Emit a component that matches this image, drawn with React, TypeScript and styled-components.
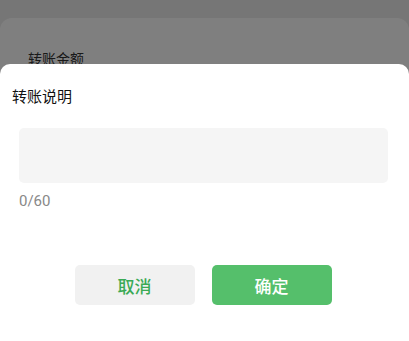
import React from "react";
import styled, { createGlobalStyle } from "styled-components";

const Global = createGlobalStyle`
  html, body { margin: 0; padding: 0; height: 100%; }
  body {
    background: #ededed;
    font-family: "Noto Sans CJK SC", "Noto Sans", sans-serif;
    overflow: hidden;
  }
`;

const Page = styled.div`
  padding-top: 18px;
  height: 100vh;
  box-sizing: border-box;
`;

const AmountCard = styled.div`
  background: #ffffff;
  border-radius: 12px;
  height: 200px;
  padding: 30px 28px 0;
  box-sizing: border-box;
`;

const CardLabel = styled.div`
  font-size: 14px;
  line-height: 20px;
  color: #333333;
`;

const Mask = styled.div`
  position: fixed;
  inset: 0;
  background: rgba(0, 0, 0, 0.5);
`;

const Sheet = styled.div`
  position: fixed;
  left: 0;
  right: 0;
  top: 64px;
  bottom: 0;
  background: #ffffff;
  border-radius: 10px 10px 0 0;
  display: flex;
  flex-direction: column;
`;

const Title = styled.div`
  padding: 21px 12px 0;
  font-size: 15px;
  line-height: 22px;
  font-weight: 400;
  color: #111111;
`;

const Field = styled.div`
  margin: 21px 21px 0 19px;
  height: 55px;
  background: #f5f5f5;
  border-radius: 5px;
`;

const Counter = styled.div`
  margin: 8px 19px 0;
  font-size: 15px;
  line-height: 20px;
  color: #888888;
  font-family: "Roboto", "Noto Sans", sans-serif;
`;

const Actions = styled.div`
  display: flex;
  justify-content: center;
  gap: 17px;
  margin-top: 54px;
  padding-right: 3px;
`;

const Button = styled.button<{ $primary?: boolean }>`
  width: 120px;
  height: 40px;
  border: none;
  border-radius: 5px;
  font-family: "Noto Sans CJK SC", sans-serif;
  font-size: 17px;
  font-weight: 500;
  background: ${(p) => (p.$primary ? "#55bf6b" : "#f1f1f1")};
  color: ${(p) => (p.$primary ? "#ffffff" : "#3aaa55")};
  padding: 0;
`;

export default function App() {
  return (
    <>
      <Global />
      <Page>
        <AmountCard>
          <CardLabel>转账金额</CardLabel>
        </AmountCard>
      </Page>
      <Mask />
      <Sheet>
        <Title>转账说明</Title>
        <Field />
        <Counter>0/60</Counter>
        <Actions>
          <Button>取消</Button>
          <Button $primary>确定</Button>
        </Actions>
      </Sheet>
    </>
  );
}
